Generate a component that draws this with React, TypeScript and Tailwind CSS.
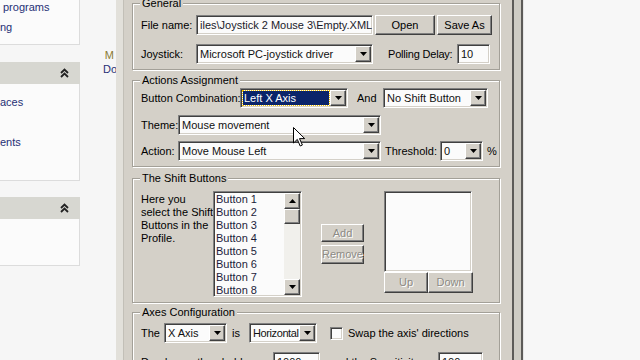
import React from 'react';

const sunken =
  'border border-t-[#808080] border-l-[#808080] border-b-white border-r-white shadow-[inset_1px_1px_0_#404040,inset_-1px_-1px_0_#d4d0c8]';
const raised =
  'border border-t-white border-l-white border-b-[#404040] border-r-[#404040] shadow-[inset_-1px_-1px_0_#808080] bg-[#d4d0c8]';
const disabledText = 'text-[#8d8b85] [text-shadow:1px_1px_0_#fff]';

const Arrow = ({ up = false }: { up?: boolean }) => (
  <svg width="7" height="4" viewBox="0 0 7 4">
    <path d={up ? 'M0 4h7L3.5 0z' : 'M0 0h7L3.5 4z'} fill="#000" />
  </svg>
);

const DropButton = () => (
  <div className={`flex h-full w-[16px] shrink-0 items-center justify-center ${raised}`}>
    <Arrow />
  </div>
);

const Combo = ({
  width,
  text,
  selected = false,
  textClass = '',
}: {
  width: string;
  text: string;
  selected?: boolean;
  textClass?: string;
}) => (
  <div className={`flex h-[20px] shrink-0 bg-[#fbfbfb] p-[1px] ${sunken} ${width}`}>
    {selected ? (
      <div className="flex min-w-0 flex-1 p-[1px]">
        <span className="flex flex-1 items-center bg-[#0a246a] px-[1px] whitespace-nowrap text-white outline-1 outline-dotted outline-[#f0c000]">
          {text}
        </span>
      </div>
    ) : (
      <span
        className={`flex min-w-0 flex-1 items-center overflow-hidden pl-[2px] whitespace-nowrap text-[#111] ${textClass}`}
      >
        {text}
      </span>
    )}
    <DropButton />
  </div>
);

const Field = ({ width, text }: { width: string; text: string }) => (
  <div
    className={`flex h-[20px] shrink-0 items-center overflow-hidden bg-[#fbfbfb] pl-[3px] whitespace-nowrap text-[#111] ${sunken} ${width}`}
  >
    {text}
  </div>
);

const Button = ({
  label,
  className,
  disabled = false,
}: {
  label: string;
  className: string;
  disabled?: boolean;
}) => (
  <div
    className={`flex shrink-0 items-center justify-center ${raised} ${disabled ? disabledText : 'text-black'} ${className}`}
  >
    {label}
  </div>
);

const Group = ({
  title,
  className,
  children,
}: {
  title: string;
  className: string;
  children: React.ReactNode;
}) => (
  <div
    className={`relative border border-[#a3a098] shadow-[inset_1px_1px_0_#fff,1px_1px_0_#fff] ${className}`}
  >
    <span className="absolute top-[-7px] left-[7px] bg-[#d4d0c8] px-[2px] leading-[13px] text-black">
      {title}
    </span>
    {children}
  </div>
);

const Chevrons = () => (
  <svg width="9" height="10" viewBox="0 0 9 10">
    <path d="M1 5 4.5 1.5 8 5M1 9 4.5 5.5 8 9" fill="none" stroke="#222" strokeWidth="1.8" />
  </svg>
);

const LeftPane = () => (
  <div className="flex w-[116px] shrink-0 text-[#263075]">
    <div className="flex w-[80px] flex-col">
      <div className="flex h-[45px] flex-col border-r border-b border-[#dcdcdc] bg-[#fbfbfb] pt-[1px] leading-[13px]">
        <span className="pl-[3px]">programs</span>
        <span className="mt-[7px]">ng</span>
      </div>
      <div className="mt-[17px] flex h-[22px] items-center justify-end bg-[#d7d7d1] pr-[11px]">
        <Chevrons />
      </div>
      <div className="flex h-[97px] flex-col border-r border-b border-[#dcdcdc] bg-[#fbfbfb] pt-[12px] leading-[13px]">
        <span>aces</span>
        <span className="mt-[27px]">ents</span>
      </div>
      <div className="mt-[16px] flex h-[22px] items-center justify-end bg-[#d7d7d1] pr-[11px]">
        <Chevrons />
      </div>
      <div className="h-[47px] border-r border-b border-[#dcdcdc] bg-[#fbfbfb]" />
    </div>
    <div className="flex flex-1 flex-col items-end pt-[49px] leading-[13px] whitespace-nowrap">
      <span className="pr-[2px] text-[#8a7b33]">M</span>
      <span className="mt-[1px] -mr-[1px]">Do</span>
    </div>
  </div>
);

const ListItems = () => (
  <div className="flex flex-1 flex-col pl-[2px] leading-[13px] text-[#1b1b3a]">
    {[1, 2, 3, 4, 5, 6, 7, 8].map((n) => (
      <span key={n}>Button {n}</span>
    ))}
  </div>
);

const Dialog = () => (
  <div className="flex w-[408px] shrink-0 bg-[#d4d0c8] text-black">
    <div className="w-[8px] border-r border-[#c2bfb7] bg-[#e2e0da]" />
    <div className="w-[8px]" />
    <div className="flex w-[368px] flex-col pt-[3px]">
      <Group title="General" className="flex flex-col gap-[9px] pt-[11px] pb-[5px] pl-[8px]">
        <div className="flex h-[20px] items-center">
          <span className="w-[55px]">File name:</span>
          <div
            className={`flex h-[20px] w-[177px] items-center overflow-hidden bg-[#fbfbfb] pl-[3px] whitespace-nowrap text-[#1a1a2a] ${sunken}`}
          >
            iles\Joystick 2 Mouse 3\Empty.XML
          </div>
          <Button label="Open" className="ml-[2px] h-[20px] w-[60px]" />
          <Button label="Save As" className="ml-[2px] h-[20px] w-[55px]" />
        </div>
        <div className="flex h-[20px] items-center">
          <span className="w-[55px]">Joystick:</span>
          <Combo width="w-[177px]" text="Microsoft PC-joystick driver" />
          <span className="ml-[15px] w-[69px] whitespace-nowrap tracking-[-0.2px]">Polling Delay:</span>
          <Field width="w-[33px]" text="10" />
        </div>
      </Group>

      <Group title="Actions Assignment" className="mt-[10px] flex flex-col pt-[7px] pb-[5px] pl-[8px]">
        <div className="flex h-[20px] items-center">
          <span className="w-[99px] whitespace-nowrap">Button Combination:</span>
          <Combo width="w-[108px]" text="Left X Axis" selected />
          <span className="ml-[9px] w-[26px]">And</span>
          <Combo width="w-[105px]" text="No Shift Button" />
        </div>
        <div className="mt-[7px] flex h-[20px] items-center">
          <span className="w-[37px]">Theme:</span>
          <Combo width="w-[203px]" text="Mouse movement" />
        </div>
        <div className="mt-[6px] flex h-[20px] items-center">
          <span className="w-[37px]">Action:</span>
          <Combo width="w-[203px]" text="Move Mouse Left" />
          <span className="ml-[4px] w-[55px]">Threshold:</span>
          <Combo width="w-[43px]" text="0" />
          <span className="ml-[4px]">%</span>
        </div>
      </Group>

      <Group title="The Shift Buttons" className="mt-[11px] flex pt-[12px] pb-[5px] pl-[8px]">
        <div className="flex h-[106px]">
          <div className="w-[72px] pt-[2px] leading-[13px] whitespace-nowrap">
            Here you
            <br />
            select the Shift
            <br />
            Buttons in the
            <br />
            Profile.
          </div>
          <div className={`flex h-[106px] w-[89px] bg-[#fbfbfb] py-[1px] pr-[1px] ${sunken}`}>
            <ListItems />
            <div className="flex w-[16px] flex-col bg-[#f1f0ec]">
              <div className={`flex h-[16px] items-center justify-center ${raised}`}>
                <Arrow up />
              </div>
              <div className={`h-[15px] ${raised}`} />
              <div className="flex-1" />
              <div className={`flex h-[16px] items-center justify-center ${raised}`}>
                <Arrow />
              </div>
            </div>
          </div>
          <div className="ml-[19px] flex flex-col gap-[3px] pt-[33px]">
            <Button label="Add" className="h-[18px] w-[43px]" disabled />
            <Button label="Remove" className="h-[19px] w-[43px]" disabled />
          </div>
          <div className="ml-[20px] flex flex-col">
            <div className={`h-[81px] w-[88px] bg-[#fbfbfb] ${sunken}`} />
            <div className="flex">
              <Button label="Up" className="h-[21px] w-[44px]" disabled />
              <Button label="Down" className="h-[21px] w-[45px]" disabled />
            </div>
          </div>
        </div>
      </Group>

      <Group title="Axes Configuration" className="mt-[9px] flex flex-col gap-[9px] pt-[10px] pb-[5px] pl-[8px]">
        <div className="flex h-[20px] items-center">
          <span className="w-[23px]">The</span>
          <Combo width="w-[63px]" text="X Axis" />
          <span className="ml-[5px] w-[17px]">is</span>
          <Combo width="w-[68px]" text="Horizontal" textClass="pl-[1px] tracking-[-0.4px]" />
          <div className={`ml-[13px] h-[13px] w-[13px] bg-[#fbfbfb] ${sunken}`} />
          <span className="ml-[5px] whitespace-nowrap">Swap the axis' directions</span>
        </div>
        <div className="flex h-[20px] items-center">
          <span className="w-[132px] whitespace-nowrap">Dead zone threshold:</span>
          <Field width="w-[47px]" text="1000" />
          <span className="ml-[10px] w-[108px] whitespace-nowrap">and the Sensitivity:</span>
          <Field width="w-[45px]" text="100" />
        </div>
      </Group>
    </div>
    <div className="w-[12px]" />
    <div className="w-[2px] bg-[#5c5b58]" />
    <div className="w-[7px] bg-[#ceccc4]" />
    <div className="w-[2px] bg-[#5c5b58]" />
    <div className="w-[1px] bg-[#e6e6e6]" />
  </div>
);

const Cursor = () => (
  <svg className="absolute top-[127px] left-[293px]" width="13" height="20" viewBox="0 0 13 20">
    <path
      d="M0.5 0.5V16l3.8-3.6 2.9 6.6 2.2-1-2.9-6.4h5.2z"
      fill="#fff"
      stroke="#000"
      strokeWidth="1"
      strokeLinejoin="round"
    />
  </svg>
);

export default function App() {
  return (
    <div className="relative flex h-[360px] w-[640px] overflow-hidden bg-[#f6f6f6] font-['Liberation_Sans',Tahoma,sans-serif] text-[11px] leading-[13px]">
      <LeftPane />
      <Dialog />
      <div className="flex-1 bg-[#f7f7f7]" />
      <Cursor />
    </div>
  );
}
